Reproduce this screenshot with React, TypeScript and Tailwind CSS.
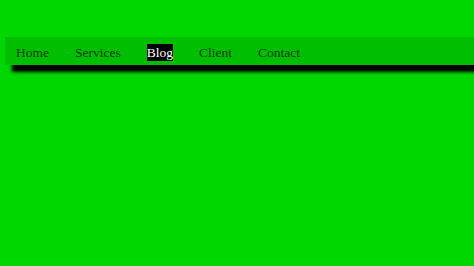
import React from 'react';

const links = ['Home', 'Services', 'Blog', 'Client', 'Contact'];

const App = () => {
    return (
        <div className="h-[266px] w-full bg-[#00d700] pt-[37px] pl-[5px] overflow-hidden">
            <nav className="flex h-[28px] items-center gap-[26px] pl-[11px] pt-[3px] bg-[#00bf00] shadow-[7px_7px_3px_#000] font-['Liberation_Serif',serif] text-[13.5px] text-[#0d3a0d]">
                {links.map((l) => (
                    <a key={l} className="leading-none">
                        {l === 'Blog' ? (
                            <span className="bg-black text-white py-[1px]">{l}</span>
                        ) : (
                            l
                        )}
                    </a>
                ))}
            </nav>
        </div>
    );
};

export default App;
